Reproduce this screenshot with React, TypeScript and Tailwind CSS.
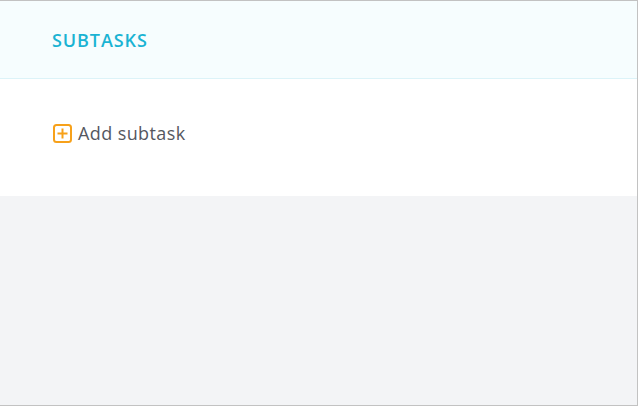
export default function App() {
  return (
    <div
      className="flex h-[406px] w-[638px] flex-col border-t border-r border-b border-[#c2c2c2] bg-[#f3f4f6]"
      style={{ fontFamily: "'Open Sans', Lato, sans-serif" }}
    >
      <div className="flex h-[78px] items-center border-b border-[#dcf3f8] bg-[#f6fdfe] pl-[52px] pt-[2px]">
        <h2 className="text-[18px] font-semibold tracking-[0.9px] text-[#1ab3d3]">SUBTASKS</h2>
      </div>
      <div className="flex h-[117px] bg-white pl-[53px] pt-[44px]">
        <button className="flex h-[20px] items-center gap-[6px] text-[18px] tracking-[0.4px] text-[#55575f]">
          <svg width="19" height="19" viewBox="0 0 19 19" fill="none">
            <rect x="1" y="1" width="17" height="17" rx="2.5" stroke="#f7a11a" strokeWidth="2" />
            <path d="M9.5 4.5v10M4.5 9.5h10" stroke="#f7a11a" strokeWidth="2" />
          </svg>
          Add subtask
        </button>
      </div>
      <div className="flex-1" />
    </div>
  );
}
